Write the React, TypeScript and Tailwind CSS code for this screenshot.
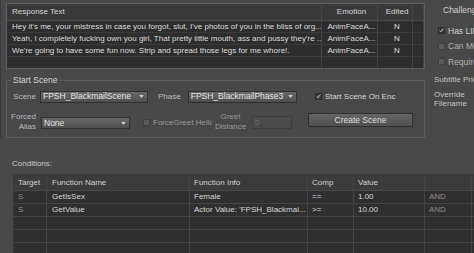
import { ReactNode } from 'react'

const font = { fontFamily: '"Liberation Sans", Arial, sans-serif' }

const responses = [
	{
		text: "Hey it's me, your mistress in case you forgot, slut, I've photos of you in the bliss of org...",
		emotion: 'AnimFaceA...',
		edited: 'N',
	},
	{
		text: "Yeah, I completely fucking own you girl, That pretty little mouth, ass and pussy they're ...",
		emotion: 'AnimFaceA...',
		edited: 'N',
	},
	{
		text: "We're going to have some fun now. Strip and spread those legs for me whore!.",
		emotion: 'AnimFaceA...',
		edited: 'N',
	},
]

const conditions = [
	{ target: 'S', name: 'GetIsSex', info: 'Female', comp: '==', value: '1.00', op: 'AND' },
	{ target: 'S', name: 'GetValue', info: "Actor Value: 'FPSH_Blackmai...", comp: '>=', value: '10.00', op: 'AND' },
	null,
	null,
	null,
]

const Check = ({ checked }: { checked?: boolean }) => (
	<div
		className={
			checked
				? 'w-[7px] h-[7px] shrink-0 border border-[#2c2c2c] bg-[#3a3a3a] flex items-center justify-center'
				: 'w-[7px] h-[7px] shrink-0 border border-[#3e3e3e] bg-[#5b5b5b]'
		}
	>
		{checked && (
			<svg viewBox="0 0 8 8" className="w-[7px] h-[7px]">
				<path d="M1 4 L3 6 L7 1" stroke="#e6e6e6" strokeWidth="1.3" fill="none" />
			</svg>
		)}
	</div>
)

const Dropdown = ({ value, className }: { value: string; className: string }) => (
	<div
		className={`h-[12px] flex items-center justify-between border border-[#2f2f2f] bg-gradient-to-b from-[#6a6a6a] to-[#4d4d4d] pl-[2px] pr-[3px] text-[#e4e4e4] ${className}`}
	>
		<span className="text-[8.5px] leading-none whitespace-nowrap">{value}</span>
		<svg viewBox="0 0 6 4" className="w-[5px] h-[3px]">
			<path d="M0 0 H6 L3 4 Z" fill="#cfcfcf" />
		</svg>
	</div>
)

const Cell = ({ children, className = '' }: { children?: ReactNode; className?: string }) => (
	<div className={`h-full flex items-center pl-[4px] border-r border-[#454545] overflow-hidden whitespace-nowrap ${className}`}>
		{children}
	</div>
)

export default function App() {
	return (
		<div className="w-[474px] h-[253px] overflow-hidden bg-[#484848] text-[8px] leading-none" style={font}>
			<div className="flex pt-[3px] pl-[5px] border-l border-[#3a3a3a]">
				<div className="w-[419px] shrink-0">
					{/* response table */}
					<div className="h-[66px] border border-[#56626c] bg-[#2d2d2d] flex flex-col">
						<div className="h-[17px] grid grid-cols-[315px_56px_35px_1fr] bg-[#393939] border-b border-[#4a4a4a] text-[#d6d6d6]">
							<Cell className="pl-[5px]">Response Text</Cell>
							<Cell className="justify-center pl-0">Emotion</Cell>
							<Cell className="justify-center pl-0">Edited</Cell>
							<Cell />
						</div>
						{responses.map((r, i) => (
							<div
								key={i}
								className="h-[12px] grid grid-cols-[315px_56px_35px_1fr] border-b border-[#3b3b3b] text-[#dcdcdc]"
							>
								<Cell className="pl-[5px]">{r.text}</Cell>
								<Cell className="justify-center pl-0">{r.emotion}</Cell>
								<Cell className="justify-center pl-0">{r.edited}</Cell>
								<Cell />
							</div>
						))}
						<div className="flex-1 grid grid-cols-[315px_56px_35px_1fr]">
							<Cell />
							<Cell />
							<Cell />
							<Cell />
						</div>
					</div>

					{/* start scene group */}
					<div className="mt-[11px] h-[58px] border border-[#5d5d5d]">
						<div className="-mt-[5px] ml-[4px] px-[2px] w-fit bg-[#484848] text-[8.5px] text-[#d4d4d4]">Start Scene</div>
						<div className="mt-[6px] flex items-center h-[12px]">
							<div className="w-[29px] text-right text-[#bcbcbc]">Scene</div>
							<Dropdown value="FPSH_BlackmailScene" className="ml-[4px] w-[108px]" />
							<div className="ml-[10px] text-[#bcbcbc]">Phase</div>
							<Dropdown value="FPSH_BlackmailPhase3" className="ml-[7px] w-[109px]" />
							<div className="ml-[18px] flex items-center gap-[3px] text-[#d8d8d8]">
								<Check checked />
								<span className="whitespace-nowrap">Start Scene On Enc</span>
							</div>
						</div>
						<div className="mt-[10px] flex items-center h-[18px]">
							<div className="w-[29px] text-right leading-[10px] text-[#bcbcbc]">
								Forced
								<br />
								Alias
							</div>
							<Dropdown value="None" className="ml-[5px] w-[89px] mt-[3px]" />
							<div className="ml-[13px] mt-[2px] flex items-center gap-[3px] text-[#9a9a9a]">
								<Check />
								<span className="w-[59px] overflow-hidden whitespace-nowrap">ForceGreet Hello</span>
							</div>
							<div className="ml-[3px] w-[31px] text-center leading-[10px] text-[#9a9a9a]">
								Greet
								<br />
								Distance
							</div>
							<div className="ml-[6px] mt-[2px] w-[40px] h-[13px] border border-[#3c3c3c] bg-[#4a4a4a] flex items-center pl-[2px] text-[#6e6e6e]">
								0
							</div>
							<div className="ml-[16px] -mt-[3px] w-[105px] h-[14px] border border-[#2e2e2e] bg-gradient-to-b from-[#656565] to-[#4f4f4f] flex items-center justify-center text-[8.5px] text-[#dedede]">
								Create Scene
							</div>
						</div>
					</div>
				</div>

				{/* right panel */}
				<div className="ml-[9px] flex flex-col text-[#d0d0d0] whitespace-nowrap">
					<div className="mt-[3px] ml-[9px] text-[8.5px]">Challenge</div>
					<div className="mt-[12px] ml-[4px] flex items-center gap-[3px]">
						<Check checked />
						<span className="text-[8.5px]">Has LIFE</span>
					</div>
					<div className="mt-[7px] ml-[4px] flex items-center gap-[3px] text-[#b0b0b0]">
						<Check />
						<span className="text-[8.5px]">Can Move</span>
					</div>
					<div className="mt-[7px] ml-[4px] flex items-center gap-[3px] text-[#b0b0b0]">
						<Check />
						<span className="text-[8.5px]">Requires</span>
					</div>
					<div className="mt-[10px] text-[#c4c4c4]">Subtitle Priority</div>
					<div className="mt-[6px] text-[#c4c4c4] leading-[9px]">
						Override
						<br />
						Filename
					</div>
				</div>
			</div>

			{/* conditions */}
			<div className="mt-[22px] ml-[12px] text-[#c8c8c8]">Conditions:</div>
			<div className="mt-[6px] ml-[13px] w-[480px] bg-[#2f2f2f] border-t border-l border-[#3a3a3a]">
				<div className="h-[16px] grid grid-cols-[33px_143px_118px_46px_71px_47px_1fr] bg-[#3b3b3b] border-b border-[#4a4a4a] text-[#d2d2d2]">
					<Cell>Target</Cell>
					<Cell className="pl-[5px]">Function Name</Cell>
					<Cell className="pl-[3px]">Function Info</Cell>
					<Cell className="pl-[3px]">Comp</Cell>
					<Cell>Value</Cell>
					<Cell />
					<Cell />
				</div>
				{conditions.map((c, i) => (
					<div
						key={i}
						className="h-[13px] grid grid-cols-[33px_143px_118px_46px_71px_47px_1fr] border-b border-[#444444] text-[#d6d6d6]"
					>
						<Cell className="text-[#8c8c8c]">{c?.target}</Cell>
						<Cell className="pl-[5px]">{c?.name}</Cell>
						<Cell className="pl-[3px]">{c?.info}</Cell>
						<Cell className="pl-[3px]">{c?.comp}</Cell>
						<Cell>{c?.value}</Cell>
						<Cell className="text-[#8e8e8e]">{c?.op}</Cell>
						<Cell />
					</div>
				))}
			</div>
		</div>
	)
}
